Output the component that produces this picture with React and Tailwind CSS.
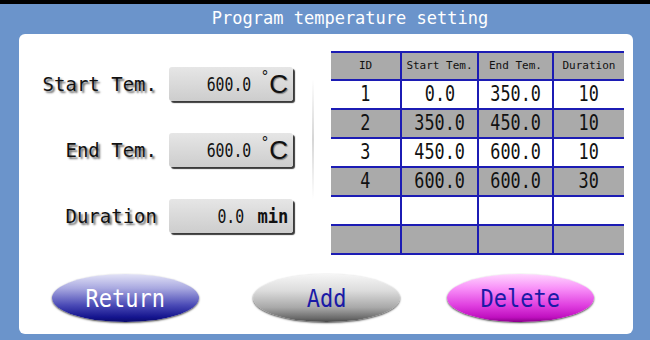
import React from "react";

const rows = [
  ["1", "0.0", "350.0", "10"],
  ["2", "350.0", "450.0", "10"],
  ["3", "450.0", "600.0", "10"],
  ["4", "600.0", "600.0", "30"],
  ["", "", "", ""],
  ["", "", "", ""],
];

const widths = ["w-[69px]", "w-[77px]", "w-[75px]", "w-[72px]"];

function ValueBox({ value, unit }) {
  return (
    <div className="w-[124px] h-[34px] rounded-[3px] bg-gradient-to-b from-[#e6e6e6] to-[#cdcdcd] shadow-[2px_2px_1px_#3a3a3a] flex items-center justify-end pr-[5px] font-['DejaVu_Sans_Mono',monospace] text-[#111]">
      <span className="inline-block origin-right scale-x-[0.74] text-[20px] leading-none">{value}</span>
      {unit === "C" ? (
        <span className="flex items-start ml-[10px]">
          <span className="text-[14px] leading-none mt-[-2px]">°</span>
          <span className="font-['Liberation_Sans',sans-serif] text-[26px] leading-none [text-shadow:1px_1px_1px_rgba(0,0,0,0.4)]">C</span>
        </span>
      ) : (
        <span className="inline-block origin-right scale-x-[0.9] text-[19px] leading-none font-bold ml-[10px]">min</span>
      )}
    </div>
  );
}

function Field({ label, value, unit }) {
  return (
    <div className="flex items-center">
      <div className="w-[150px] text-right pr-[12px] text-[19px] leading-none text-[#111] font-['DejaVu_Sans_Mono',monospace] [text-shadow:2px_2px_2px_rgba(0,0,0,0.6)]">
        {label}
      </div>
      <ValueBox value={value} unit={unit} />
    </div>
  );
}

function OvalButton({ label, className, textClass }) {
  return (
    <button className={"w-[147px] h-[48px] rounded-[50%] flex items-center justify-center shadow-[0_1px_2px_rgba(0,0,0,0.7)] " + className}>
      <span className={"inline-block scale-x-[0.88] text-[25px] leading-none font-['DejaVu_Sans_Mono',monospace] " + textClass}>{label}</span>
    </button>
  );
}

export default function App() {
  return (
    <div className="w-[650px] h-[340px] bg-black pt-[4px]">
      <div className="h-[336px] bg-[#6b94cb] flex flex-col">
        <div className="h-[30px] pl-[50px] flex items-center justify-center text-white text-[17px] font-['DejaVu_Sans_Mono',monospace]">
          Program temperature setting
        </div>
        <div className="ml-[19px] mr-[17px] h-[300px] bg-white rounded-[6px] flex flex-col">
          <div className="flex h-[240px]">
            <div className="w-[293px] pt-[33px] flex flex-col gap-[32px]">
              <Field label="Start Tem." value="600.0" unit="C" />
              <Field label="End Tem." value="600.0" unit="C" />
              <Field label="Duration" value="0.0" unit="min" />
            </div>
            <div className="w-[19px] flex justify-start pt-[45px]">
              <div className="w-[2px] h-[120px] bg-gradient-to-b from-white via-[#d6d6d6] to-white" />
            </div>
            <div className="pt-[17px]">
              <div className="flex h-[28px] border-t-2 border-[#1c1cb4] bg-[#aaaaaa] font-['DejaVu_Sans_Mono',monospace] text-[11px] text-[#111]">
                {["ID", "Start Tem.", "End Tem.", "Duration"].map((h, i) => (
                  <div key={i} className={widths[i] + " flex items-center justify-center " + (i > 0 ? "border-l-2 border-[#1c1cb4]" : "")}>
                    {h}
                  </div>
                ))}
              </div>
              {rows.map((r, ri) => (
                <div
                  key={ri}
                  className={"flex h-[29px] border-t-2 border-[#1c1cb4] font-['DejaVu_Sans_Mono',monospace] text-[21px] text-[#111] " + (ri % 2 === 1 ? "bg-[#aaaaaa]" : "bg-white") + (ri === rows.length - 1 ? " border-b-2 h-[31px]" : "")}
                >
                  {r.map((c, ci) => (
                    <div key={ci} className={widths[ci] + " flex items-center justify-center " + (ci > 0 ? "border-l-2 border-[#1c1cb4]" : "")}>
                      <span className="inline-block scale-x-[0.8] leading-none">{c}</span>
                    </div>
                  ))}
                </div>
              ))}
            </div>
          </div>
          <div className="flex items-center pl-[33px] h-[48px]">
            <OvalButton
              label="Return"
              className="bg-[linear-gradient(to_bottom,#e2e2f6_0%,#a8a8e0_30%,#4a4ab6_65%,#14148e_90%,#0c0c6c_100%)]"
              textClass="text-white"
            />
            <div className="w-[54px]" />
            <OvalButton
              label="Add"
              className="bg-[linear-gradient(to_bottom,#f6f6f6_0%,#dcdcdc_35%,#a8a8a8_70%,#6a6a6a_92%,#4a4a4a_100%)]"
              textClass="text-[#1a1aa6]"
            />
            <div className="w-[47px]" />
            <OvalButton
              label="Delete"
              className="bg-[linear-gradient(to_bottom,#ffd6ff_0%,#f890f8_30%,#e040e0_65%,#c010c0_90%,#8a008a_100%)]"
              textClass="text-[#1a1aa6]"
            />
          </div>
        </div>
      </div>
    </div>
  );
}
